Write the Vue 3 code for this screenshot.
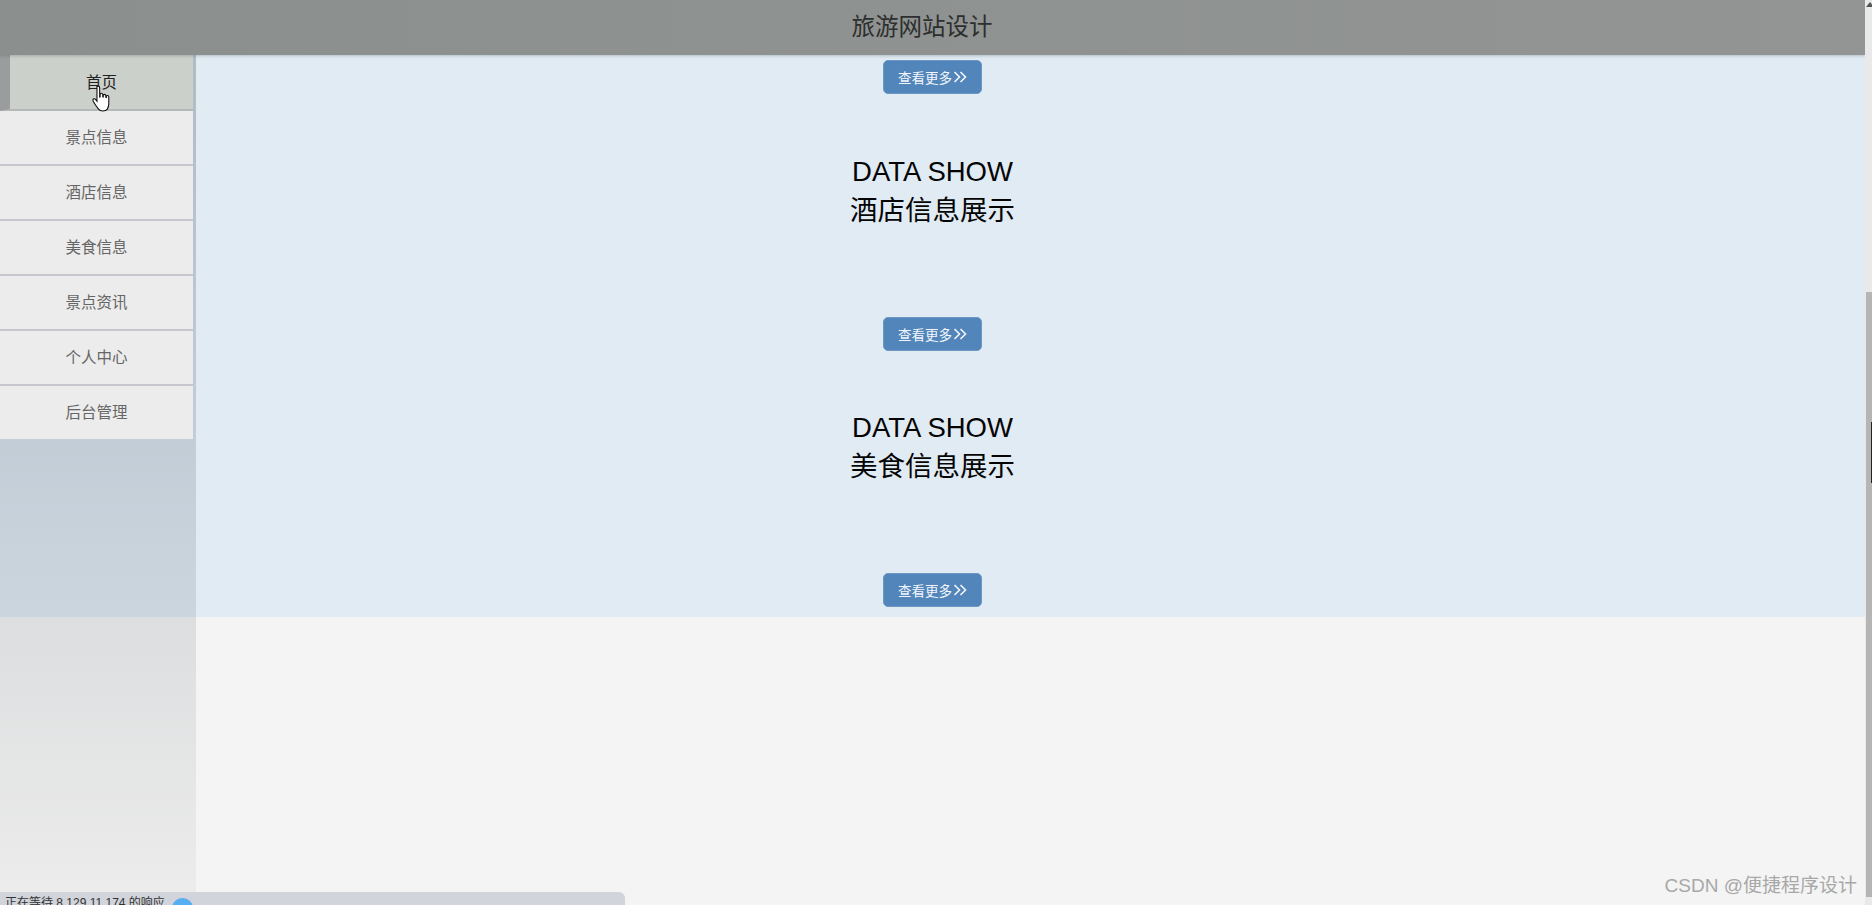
<script setup>
const menu = ["首页", "景点信息", "酒店信息", "美食信息", "景点资讯", "个人中心", "后台管理"];
const sections = ["酒店信息展示", "美食信息展示"];
</script>

<template>
  <div class="screen">
    <div class="page">
      <header class="top">旅游网站设计</header>

      <main class="content">
        <a class="more">
          查看更多
          <svg class="chevrons" viewBox="0 0 14 12" width="14" height="12">
            <path d="M1.5 1 L6.5 6 L1.5 11 M7.5 1 L12.5 6 L7.5 11" />
          </svg>
        </a>
        <section v-for="name in sections" :key="name" class="block">
          <h2 class="title">DATA SHOW<br />{{ name }}</h2>
          <a class="more">
            查看更多
            <svg class="chevrons" viewBox="0 0 14 12" width="14" height="12">
              <path d="M1.5 1 L6.5 6 L1.5 11 M7.5 1 L12.5 6 L7.5 11" />
            </svg>
          </a>
        </section>
      </main>

      <aside class="side">
        <ul class="menu">
          <li v-for="(item, i) in menu" :key="item" :class="['item', { active: i === 0 }]">
            <span class="label">{{ item }}</span>
          </li>
        </ul>
      </aside>

      <!-- hand cursor over the active item -->
      <svg class="cursor" viewBox="0 0 20 26" width="25" height="32">
        <path
          d="M5.5 2.2c1-.9 2.2-.2 2.2 1v7.3l.4-.1V8.6c0-1.5 2-1.5 2.1 0v1.9l.4.1V9.5c0-1.4 2-1.4 2.1 0v1.4l.4.1v-.7c0-1.4 2-1.3 2 .1v5.8c0 1.9-.5 3-1.2 4.2c-.8 1.2-2.2 1.5-3.6 1.5c-1.700 0-2.900-.7-3.700-1.700c-1-1.300-2-2.700-3.200-4.600c-.7-1.100-1.400-2-1.200-2.800c.3-1 1.600-1 2.300-.1l1 1.200V3.200c0-.4 0-.8-.1-1z"
        />
      </svg>

      <div class="status">
        <span>正在等待 8.129.11.174 的响应</span>
        <i class="dot"></i>
      </div>
      <div class="mark">CSDN @便捷程序设计</div>
    </div>

    <div class="scrollbar">
      <svg class="arrow" viewBox="0 0 8 5" width="8" height="5"><path d="M4 0 L8 5 L0 5 Z" /></svg>
      <div class="thumb"><i class="tick"></i></div>
    </div>
  </div>
</template>

<style scoped>
.screen {
  width: 1872px;
  height: 905px;
  display: flex;
  overflow: hidden;
  background: #f4f4f4;
  font-family: "Liberation Sans", "Noto Sans CJK SC", sans-serif;
}

.page {
  position: relative;
  flex: 1;
  min-width: 0;
  overflow: hidden;
}

.top {
  position: relative;
  z-index: 3;
  height: 55px;
  padding: 0 21px 6px 0;
  box-sizing: border-box;
  display: flex;
  align-items: center;
  justify-content: center;
  font-size: 23.5px;
  color: #2d2f2f;
  background: linear-gradient(90deg, #8b8f8d, #929594);
  box-shadow: 0 1px 3px rgba(70, 80, 90, 0.3);
}

.content {
  height: 562px;
  padding-top: 5px;
  box-sizing: border-box;
  display: flex;
  flex-direction: column;
  align-items: center;
  background: #e1ebf4;
}

.block {
  display: flex;
  flex-direction: column;
  align-items: center;
}

.title {
  margin: 57.5px 0 87px;
  font-size: 27.5px;
  font-weight: 400;
  line-height: 39px;
  text-align: center;
  color: #050505;
}

.more {
  width: 99px;
  height: 34px;
  box-sizing: border-box;
  display: flex;
  align-items: center;
  justify-content: center;
  font-size: 13.5px;
  color: #f2f6fa;
  background: #5285ba;
  border: 1px solid #6c97c4;
  border-radius: 5px;
}

.chevrons {
  margin-left: 1px;
}

.chevrons path {
  fill: none;
  stroke: #f2f6fa;
  stroke-width: 1.6;
}

.side {
  position: absolute;
  z-index: 2;
  top: 55px;
  bottom: 0;
  left: 0;
  width: 196px;
  background: linear-gradient(rgba(10, 25, 40, 0.23), rgba(0, 0, 0, 0.03));
}

.menu {
  margin: 0;
  padding: 0;
  list-style: none;
}

.item {
  width: 193px;
  height: 55px;
  padding-bottom: 3px;
  box-sizing: border-box;
  display: flex;
  align-items: center;
  justify-content: center;
  font-size: 15.5px;
  color: #666;
  background: #ececec;
  border-bottom: 2px solid #c5c7cc;
}

.item:last-child {
  height: 53px;
  border-bottom: 0;
}

.item.active {
  height: 56px;
  padding-bottom: 2px;
  color: #222;
  background: #cbd0cb;
  border-left: 10px solid #9a9c9e;
  border-bottom-color: #b4b9b8;
}

.cursor {
  position: absolute;
  z-index: 4;
  top: 84px;
  left: 90px;
}

.cursor path {
  fill: #fff;
  stroke: #111;
  stroke-width: 0.9;
}

.status {
  position: absolute;
  z-index: 5;
  left: 0;
  bottom: 0;
  width: 625px;
  height: 13px;
  padding-left: 5px;
  box-sizing: border-box;
  display: flex;
  align-items: flex-start;
  font-size: 12px;
  line-height: 22px;
  color: #333;
  background: #d1d4da;
  border-top-right-radius: 6px;
  overflow: hidden;
}

.dot {
  flex: none;
  width: 21px;
  height: 21px;
  margin: 6px 0 0 7px;
  border-radius: 50%;
  background: #57aef0;
}

.mark {
  position: absolute;
  z-index: 5;
  right: 8px;
  bottom: 8px;
  font-size: 19px;
  color: #a8a8a8;
}

.scrollbar {
  width: 7px;
  display: flex;
  flex-direction: column;
  background: #e9e9e9;
  position: relative;
  overflow: hidden;
}

.arrow {
  position: absolute;
  top: 2px;
  left: 1px;
}

.arrow path {
  fill: #555;
}

.thumb {
  position: relative;
  height: 605px;
  margin: 292px 0 8px 1px;
  background: #b5b5b5;
}

.tick {
  position: absolute;
  top: 130px;
  right: 0;
  width: 1px;
  height: 61px;
  background: #222;
}
</style>
